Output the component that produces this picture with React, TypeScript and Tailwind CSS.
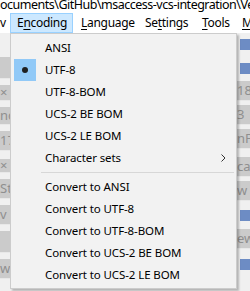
import React from 'react';

const FONT = { fontFamily: '"Noto Sans", "Open Sans", sans-serif' };

const ITEMS_TOP = ['ANSI', 'UTF-8', 'UTF-8-BOM', 'UCS-2 BE BOM', 'UCS-2 LE BOM'];
const ITEMS_BOTTOM = [
  'Convert to ANSI',
  'Convert to UTF-8',
  'Convert to UTF-8-BOM',
  'Convert to UCS-2 BE BOM',
  'Convert to UCS-2 LE BOM',
];

function MenuItem({ label, checked, sub }: { label: string; checked?: boolean; sub?: boolean }) {
  return (
    <div className="relative flex h-[22px] items-center pl-[34px] text-[11.5px] tracking-[-0.1px] text-black">
      {checked && (
        <div className="absolute left-[3px] top-0 flex h-[22px] w-[22px] items-center justify-center bg-[#91c9f7]">
          <div className="h-[6px] w-[6px] rounded-full bg-[#1f1f1f]" />
        </div>
      )}
      <span>{label}</span>
      {sub && (
        <svg className="absolute right-[10px] top-[7px]" width="5" height="8" viewBox="0 0 5 8">
          <path d="M0.5 0.5 L4 4 L0.5 7.5" fill="none" stroke="#333" strokeWidth="1" />
        </svg>
      )}
    </div>
  );
}

// bits of the window behind the menu
function SideBits({ rows }: { rows: { h: number; text?: string; kind?: string }[] }) {
  return (
    <div className="flex flex-col">
      {rows.map((r, i) => (
        <div
          key={i}
          style={{ height: r.h }}
          className={
            r.kind === 'btn'
              ? 'flex shrink-0 items-center overflow-hidden border-b border-[#e8e8e8] bg-[#cbcbcb] text-[13px] text-[#8f8f8f]'
              : r.kind === 'blue'
              ? 'flex shrink-0 items-center bg-[#f0f0f0]'
              : 'shrink-0 bg-[#f0f0f0]'
          }
        >
          {r.kind === 'blue' && <div className="ml-[3px] h-[11px] w-[11px] bg-[#6d8cc4]" />}
          {r.text && <span className="whitespace-nowrap">{r.text}</span>}
        </div>
      ))}
    </div>
  );
}

export default function App() {
  return (
    <div className="relative h-[291px] w-[250px] overflow-hidden bg-white" style={FONT}>
      {/* title path */}
      <div className="h-[13px] overflow-hidden whitespace-nowrap text-[12.5px] leading-[13px] tracking-[-0.5px] text-black">
        <span className="relative top-[-2px]">ocuments\GitHub\msaccess-vcs-integration\Ve</span>
      </div>

      {/* menu bar */}
      <div className="flex h-[20px] items-center whitespace-nowrap text-[12px] tracking-[-0.3px] text-black">
        <span className="w-[10px] shrink-0 overflow-hidden pl-[0px]">v</span>
        <span className="flex h-[20px] w-[63px] shrink-0 items-center border border-[#99d1ff] bg-[#cce8ff] pl-[6px]">
          E<span className="underline underline-offset-2">n</span>coding
        </span>
        <span className="w-[65px] shrink-0 pl-[8px]">
          <span className="underline underline-offset-2">L</span>anguage
        </span>
        <span className="w-[57px] shrink-0 pl-[7px]">
          Se<span className="underline underline-offset-2">t</span>tings
        </span>
        <span className="w-[40px] shrink-0 pl-[7px]">
          <span className="underline underline-offset-2">T</span>ools
        </span>
        <span className="shrink-0 pl-[7px]">
          <span className="underline underline-offset-2">M</span>acro
        </span>
      </div>

      {/* content behind */}
      <div className="flex h-[258px] justify-between bg-[#f0f0f0]">
        <div className="w-[10px] shrink-0 overflow-hidden">
          <SideBits
            rows={[
              { h: 24 },
              { h: 22, kind: 'btn' },
              { h: 6 },
              { h: 16, kind: 'btn', text: '×' },
              { h: 6 },
              { h: 18, kind: 'btn', text: 'nc' },
              { h: 6 },
              { h: 20, kind: 'btn', text: '17' },
              { h: 8 },
              { h: 14, kind: 'btn', text: '×' },
              { h: 6 },
              { h: 20, kind: 'btn', text: 'St' },
              { h: 6 },
              { h: 20, kind: 'btn', text: 'v' },
              { h: 6 },
              { h: 22, kind: 'btn' },
              { h: 6 },
              { h: 20, kind: 'btn', text: 'w' },
            ]}
          />
        </div>
        <div className="w-[13px] shrink-0 overflow-hidden">
          <SideBits
            rows={[
              { h: 4 },
              { h: 14, kind: 'blue' },
              { h: 10 },
              { h: 14, kind: 'blue' },
              { h: 6 },
              { h: 20, kind: 'btn', text: '18' },
              { h: 4 },
              { h: 20, kind: 'btn', text: '3' },
              { h: 4 },
              { h: 20, kind: 'btn', text: 'nF' },
              { h: 8 },
              { h: 20, kind: 'btn', text: 'ca' },
              { h: 4 },
              { h: 20, kind: 'btn', text: 'w' },
              { h: 6 },
              { h: 16, kind: 'blue' },
              { h: 6 },
              { h: 20, kind: 'btn', text: 'ew' },
              { h: 6 },
              { h: 18, kind: 'blue' },
            ]}
          />
        </div>
      </div>

      {/* dropdown */}
      <div className="absolute left-[10px] top-[33px] w-[227px] border border-[#cccccc] bg-[#f2f2f2] pt-[3px] pb-[2px] shadow-[2px_2px_2px_rgba(0,0,0,0.25)]">
        {ITEMS_TOP.map((it) => (
          <MenuItem key={it} label={it} checked={it === 'UTF-8'} />
        ))}
        <MenuItem label="Character sets" sub />
        <div className="mx-[2px] my-[3px] ml-[30px] h-px bg-[#d7d7d7]" />
        {ITEMS_BOTTOM.map((it) => (
          <MenuItem key={it} label={it} />
        ))}
      </div>
    </div>
  );
}
